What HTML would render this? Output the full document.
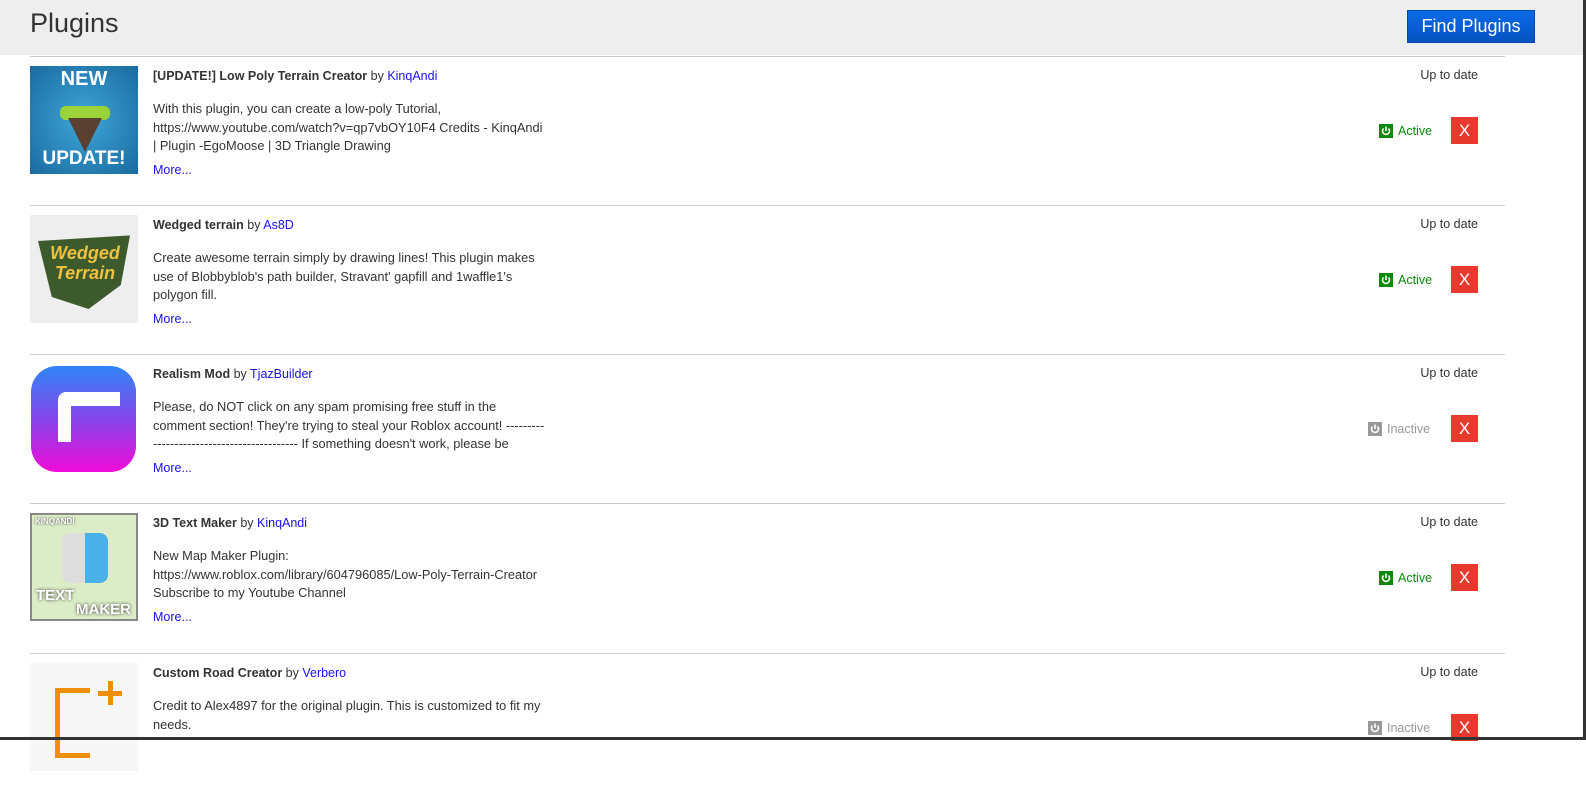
<!DOCTYPE html><html><head><style>
body{margin:0;width:1586px;height:740px;background:#fff;font-family:"Liberation Sans",sans-serif;overflow:hidden;position:relative}
.hdr{position:absolute;left:0;top:0;width:1583px;height:55px;background:#eeeeee}
.hdr h1{position:absolute;left:30px;top:8px;margin:0;font-weight:normal;font-size:27px;color:#333}
.fp{position:absolute;left:1407px;top:10px;width:128px;height:33px;background:linear-gradient(#0a6ae8,#0553c0);border:1px solid #0449b0;box-sizing:border-box;color:#fff;font-size:18px;text-align:center;line-height:31px}
.rb{position:absolute;right:0;top:0;width:3px;height:740px;background:#333}
.bb{position:absolute;left:0;bottom:0;width:1586px;height:3px;background:#333}
.row{position:absolute;left:30px;width:1475px;height:149px;border-top:1px solid #ccc}
.img{position:absolute;left:0;top:9px;width:108px;height:108px;overflow:hidden}
.t{position:absolute;left:123px;top:12px;font-size:12.5px;color:#333;white-space:nowrap}
.t a,.more{color:#1a10f0;font-weight:normal}
.d{position:absolute;left:123px;top:43px;width:395px;height:55px;overflow:hidden;font-size:12.8px;line-height:18.5px;color:#333}
.more{position:absolute;left:123px;top:106px;font-size:12.5px}
.u{position:absolute;right:27px;top:11px;font-size:12.5px;color:#333}
.st{position:absolute;top:67px;font-size:12.5px;display:flex;align-items:center}
.st svg{margin-right:5px}
.x{position:absolute;left:1421px;top:60px;width:27px;height:27px;background:#e8392f;color:#fff;font-size:17px;text-align:center;line-height:27px}
</style></head><body>
<svg width="0" height="0" style="position:absolute"><defs><g id="pw"><path d="M4.5 4.5a3.5 3.5 0 1 0 5 0" fill="none" stroke="#fff" stroke-width="1.6"/><path d="M7 2.5v4.5" stroke="#fff" stroke-width="1.6"/></g></defs></svg>
<div class="hdr"><h1>Plugins</h1><div class="fp">Find Plugins</div></div>

<div class="row" style="top:56px">
<div class="img" style="background:radial-gradient(circle at 50% 50%,#3fa6d8,#1a6aa0);">
<div style="position:absolute;left:0;width:108px;top:2px;text-align:center;color:#fff;font-weight:bold;font-size:20px">NEW</div>
<div style="position:absolute;left:30px;top:40px;width:50px;height:14px;background:#9bd43a;border-radius:6px"></div>
<div style="position:absolute;left:38px;top:52px;width:0;height:0;border-left:17px solid transparent;border-right:17px solid transparent;border-top:34px solid #5a4030"></div>
<div style="position:absolute;left:0;width:108px;top:82px;text-align:center;color:#fff;font-weight:bold;font-size:19px">UPDATE!</div></div>
<div class="t"><b>[UPDATE!] Low Poly Terrain Creator</b> by <a>KinqAndi</a></div>
<div class="d">With this plugin, you can create a low-poly Tutorial, https://www.youtube.com/watch?v=qp7vbOY10F4 Credits - KinqAndi | Plugin -EgoMoose | 3D Triangle Drawing</div>
<div class="more">More...</div>
<div class="u">Up to date</div>
<div class="st" style="left:1349px;color:#0a8a0a"><svg width="14" height="14"><rect width="14" height="14" fill="#0a8a0a"/><use href="#pw"/></svg>Active</div>
<div class="x">X</div></div>

<div class="row" style="top:205px">
<div class="img" style="background:#eee"><div style="position:absolute;left:8px;top:14px;width:92px;height:80px;background:#3d5a2c;clip-path:polygon(0 15%,100% 8%,90% 70%,55% 100%,15% 85%)"></div>
<div style="position:absolute;left:10px;top:28px;color:#f0c040;font-weight:bold;font-style:italic;font-size:18px;line-height:20px;text-align:center;width:90px">Wedged<br>Terrain</div></div>
<div class="t"><b>Wedged terrain</b> by <a>As8D</a></div>
<div class="d">Create awesome terrain simply by drawing lines! This plugin makes use of Blobbyblob's path builder, Stravant' gapfill and 1waffle1's polygon fill.</div>
<div class="more">More...</div>
<div class="u">Up to date</div>
<div class="st" style="left:1349px;color:#0a8a0a"><svg width="14" height="14"><rect width="14" height="14" fill="#0a8a0a"/><use href="#pw"/></svg>Active</div>
<div class="x">X</div></div>

<div class="row" style="top:354px">
<div class="img"><div style="position:absolute;left:1px;top:2px;width:105px;height:106px;border-radius:26px;background:linear-gradient(#2f86f6,#9040e8 55%,#f00ad8)"></div>
<div style="position:absolute;left:28px;top:28px;width:13px;height:50px;background:#fff;border-radius:8px 0 0 0"></div>
<div style="position:absolute;left:28px;top:28px;width:62px;height:14px;background:#fff;border-radius:10px 0 0 0"></div></div>
<div class="t"><b>Realism Mod</b> by <a>TjazBuilder</a></div>
<div class="d">Please, do NOT click on any spam promising free stuff in the comment section! They're trying to steal your Roblox account! ------------------------------------------- If something doesn't work, please be</div>
<div class="more">More...</div>
<div class="u">Up to date</div>
<div class="st" style="left:1338px;color:#999"><svg width="14" height="14"><rect width="14" height="14" fill="#999"/><use href="#pw"/></svg>Inactive</div>
<div class="x">X</div></div>

<div class="row" style="top:503px">
<div class="img" style="border:2px solid #888;box-sizing:border-box;background:#dcecc6">
<div style="position:absolute;left:3px;top:2px;color:#fff;font-size:8px;font-weight:bold;text-shadow:0 0 2px #333">KINQANDI</div>
<div style="position:absolute;left:30px;top:18px;width:46px;height:50px;background:linear-gradient(90deg,#ddd 50%,#4ab0e8 50%);border-radius:8px"></div>
<div style="position:absolute;left:4px;top:72px;color:#fff;font-weight:bold;font-size:15px;text-shadow:0 0 3px #333">TEXT</div>
<div style="position:absolute;left:44px;top:86px;color:#fff;font-weight:bold;font-size:15px;text-shadow:0 0 3px #333">MAKER</div></div>
<div class="t"><b>3D Text Maker</b> by <a>KinqAndi</a></div>
<div class="d">New Map Maker Plugin:<br>https://www.roblox.com/library/604796085/Low-Poly-Terrain-Creator Subscribe to my Youtube Channel</div>
<div class="more">More...</div>
<div class="u">Up to date</div>
<div class="st" style="left:1349px;color:#0a8a0a"><svg width="14" height="14"><rect width="14" height="14" fill="#0a8a0a"/><use href="#pw"/></svg>Active</div>
<div class="x">X</div></div>

<div class="row" style="top:653px">
<div class="img" style="background:#f7f7f7"><div style="position:absolute;left:25px;top:25px;width:30px;height:60px;border:5px solid #f0900a;border-right:none"></div>
<div style="position:absolute;left:68px;top:28px;width:24px;height:5px;background:#f0900a"></div><div style="position:absolute;left:78px;top:18px;width:5px;height:24px;background:#f0900a"></div></div>
<div class="t"><b>Custom Road Creator</b> by <a>Verbero</a></div>
<div class="d">Credit to Alex4897 for the original plugin. This is customized to fit my needs.</div>
<div class="u">Up to date</div>
<div class="st" style="left:1338px;color:#999"><svg width="14" height="14"><rect width="14" height="14" fill="#999"/><use href="#pw"/></svg>Inactive</div>
<div class="x">X</div></div>

<div class="rb"></div><div class="bb"></div>
</body></html>
